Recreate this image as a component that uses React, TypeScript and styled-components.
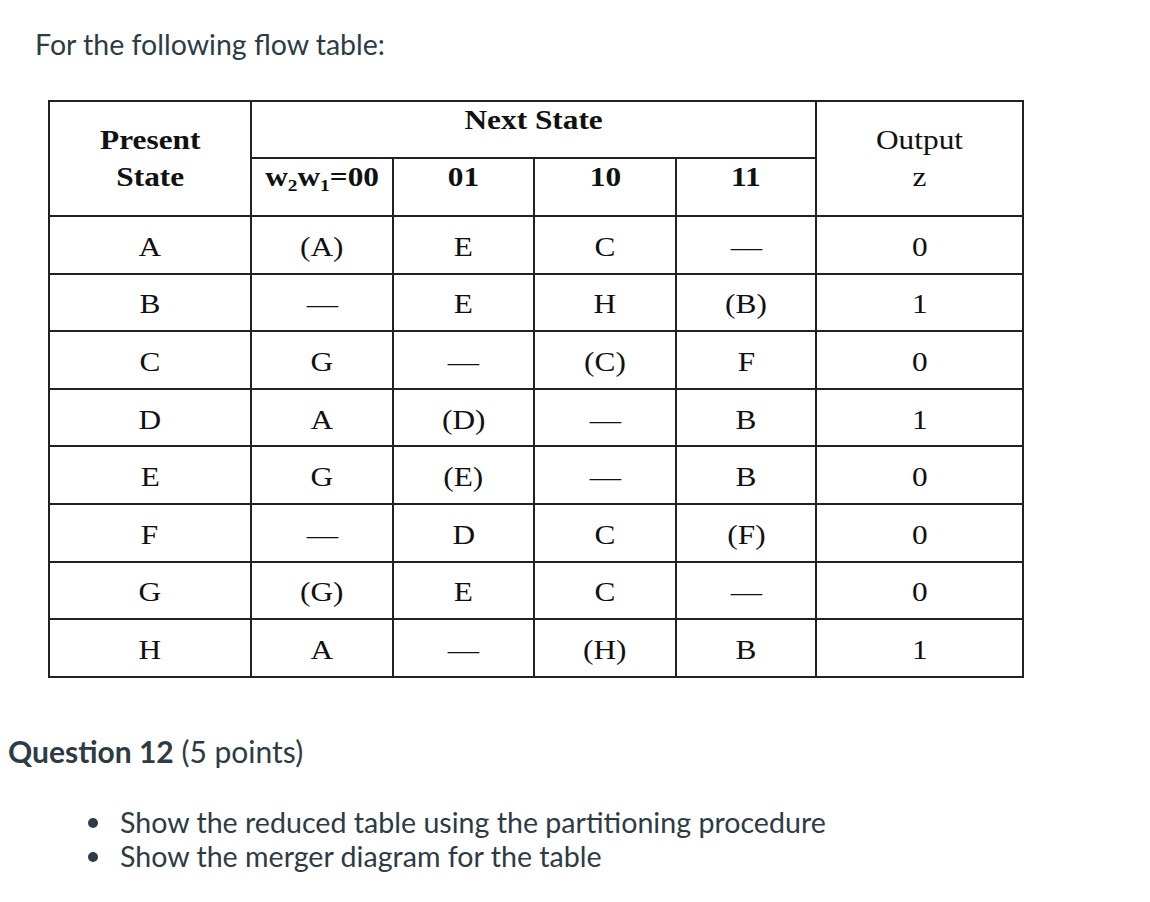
import React from "react";
import styled, { createGlobalStyle } from "styled-components";

const GlobalStyle = createGlobalStyle`
  html, body { margin: 0; padding: 0; background: #ffffff; }
  body { font-family: Lato, "Open Sans", sans-serif; color: #2d3b45; }
`;

const Page = styled.div`
  width: 1150px;
  height: 902px;
  box-sizing: border-box;
  padding-top: 26px;
  display: flex;
  flex-direction: column;
`;

const Intro = styled.p`
  margin: 0 0 0 35px;
  font-size: 28.5px;
  line-height: 36px;
`;

const FlowTable = styled.table`
  margin: 38px 0 0 48px;
  width: 974px;
  border-collapse: collapse;
  table-layout: fixed;
  font-family: "Liberation Serif", "Times New Roman", serif;
  color: #111;
  font-size: 27px;
`;

const Cell = styled.td<{ $bold?: boolean; $h?: number }>`
  border: 2px solid #222;
  text-align: center;
  vertical-align: middle;
  padding: 0;
  height: ${(p) => p.$h ?? 56}px;
  font-weight: ${(p) => (p.$bold ? 700 : 400)};
  line-height: 37px;
`;

const TopCell = styled(Cell)`
  vertical-align: top;
  padding-top: 0;
`;

const DataCell = styled(Cell)`
  padding-top: 5px;
  height: 50.6px;
`;

const Txt = styled.span`
  display: inline-block;
  transform: scaleX(1.16);
  transform-origin: center;
`;

const Sub = styled.sub`
  font-size: 0.62em;
  vertical-align: -0.28em;
  line-height: 0;
`;

const Question = styled.div`
  margin: 55px 0 0 8px;
  font-size: 30px;
  line-height: 36px;
`;

const Strong = styled.strong`
  font-weight: 700;
`;

const Bullets = styled.ul`
  margin: 36px 0 0 0;
  padding-left: 120px;
  font-size: 28.6px;
  line-height: 34px;
  list-style: none;
`;

const Bullet = styled.li`
  position: relative;
  &::before {
    content: "";
    position: absolute;
    left: -32px;
    top: 13px;
    width: 10px;
    height: 10px;
    border-radius: 50%;
    background: #2d3b45;
  }
`;

const colWidths = [202, 142, 141, 142, 140, 207];

const rows: string[][] = [
  ["A", "(A)", "E", "C", "—", "0"],
  ["B", "—", "E", "H", "(B)", "1"],
  ["C", "G", "—", "(C)", "F", "0"],
  ["D", "A", "(D)", "—", "B", "1"],
  ["E", "G", "(E)", "—", "B", "0"],
  ["F", "—", "D", "C", "(F)", "0"],
  ["G", "(G)", "E", "C", "—", "0"],
  ["H", "A", "—", "(H)", "B", "1"],
];

export default function App() {
  return (
    <>
      <GlobalStyle />
      <Page>
        <Intro>For the following flow table:</Intro>
        <FlowTable>
          <colgroup>
            {colWidths.map((w, i) => (
              <col key={i} style={{ width: w }} />
            ))}
          </colgroup>
          <thead>
            <tr>
              <Cell $bold rowSpan={2}>
                <Txt>
                  Present
                  <br />
                  State
                </Txt>
              </Cell>
              <TopCell $bold colSpan={4} $h={55}>
                <Txt>Next State</Txt>
              </TopCell>
              <Cell rowSpan={2}>
                <Txt>
                  Output
                  <br />z
                </Txt>
              </Cell>
            </tr>
            <tr>
              <TopCell $bold $h={56}>
                <Txt>
                  w<Sub>2</Sub>w<Sub>1</Sub>=00
                </Txt>
              </TopCell>
              <TopCell $bold $h={56}>
                <Txt>01</Txt>
              </TopCell>
              <TopCell $bold $h={56}>
                <Txt>10</Txt>
              </TopCell>
              <TopCell $bold $h={56}>
                <Txt>11</Txt>
              </TopCell>
            </tr>
          </thead>
          <tbody>
            {rows.map((r, i) => (
              <tr key={i}>
                {r.map((c, j) => (
                  <DataCell key={j}>
                    <Txt>{c}</Txt>
                  </DataCell>
                ))}
              </tr>
            ))}
          </tbody>
        </FlowTable>
        <Question>
          <Strong>Question 12</Strong> (5 points)
        </Question>
        <Bullets>
          <Bullet>Show the reduced table using the partitioning procedure</Bullet>
          <Bullet>Show the merger diagram for the table</Bullet>
        </Bullets>
      </Page>
    </>
  );
}
